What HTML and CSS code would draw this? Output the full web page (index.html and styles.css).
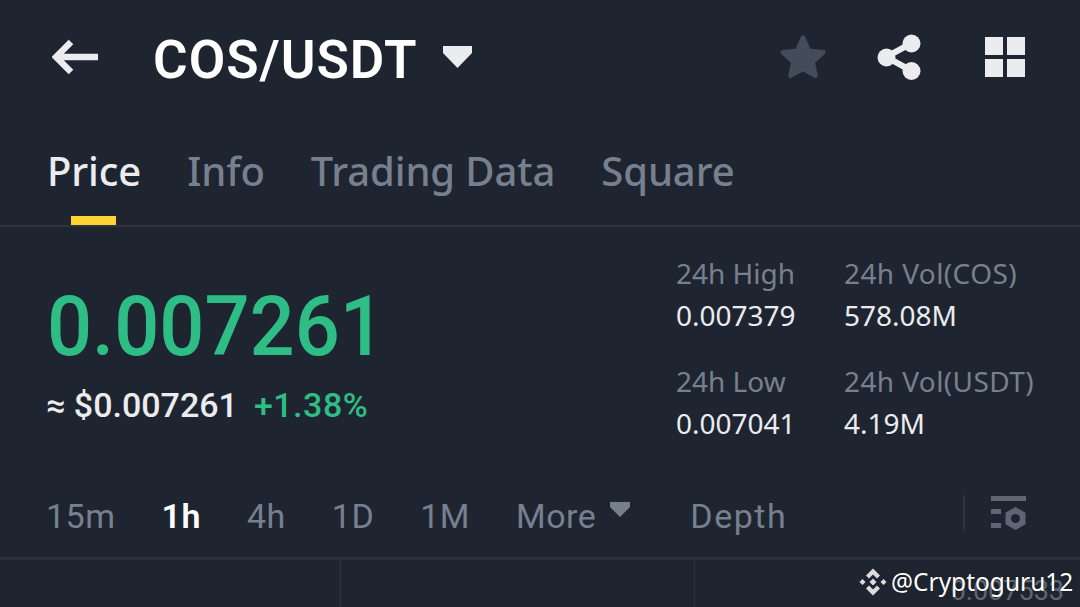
FILE: index.html
```html
<!DOCTYPE html>
<html lang="en">
<head>
<meta charset="utf-8">
<title>COS/USDT</title>
<link rel="stylesheet" href="styles.css">
</head>
<body>
<main class="screen">
  <header class="topbar">
    <svg class="back" width="46" height="36" viewBox="0 0 46 36"><path d="M46 18H5M19 3 4 18l15 15" fill="none" stroke="#eaecef" stroke-width="6.500"/></svg>
    <h1 class="pair">COS/USDT</h1>
    <svg class="caret" width="29" height="22" viewBox="0 0 29 22"><path d="M0 0h29v7L14.500 22 0 7z" fill="#eaecef"/></svg>
    <div class="actions">
      <svg class="star" width="46" height="46" viewBox="0 0 46 46"><path d="M23 1.500c1 0 1.800.6 2.200 1.500l5.300 11.800 13 1.300c2 .2 2.700 2.500 1.300 3.800l-9.700 8.900 2.700 12.500c.4 1.900-1.700 3.400-3.400 2.400L23 37.400l-11.400 6.300c-1.700 1-3.800-.5-3.400-2.400l2.700-12.500-9.700-8.900c-1.400-1.300-.7-3.600 1.300-3.800l13-1.300L20.800 3c.4-.9 1.200-1.500 2.200-1.500z" fill="#434c5a"/></svg>
      <svg class="share" width="44" height="46" viewBox="0 0 44 46"><path d="M35 9 9 23l26 14" fill="none" stroke="#eaecef" stroke-width="6"/><circle cx="34.500" cy="9.500" r="9" fill="#eaecef"/><circle cx="9.500" cy="23.500" r="9" fill="#eaecef"/><circle cx="34.500" cy="37" r="9" fill="#eaecef"/></svg>
      <svg class="grid-icon" width="40" height="40" viewBox="0 0 40 40"><path d="M0 0h18v18H0zM22 0h18v18H22zM0 22h18v18H0zM22 22h18v18H22z" fill="#eaecef"/></svg>
    </div>
  </header>

  <nav class="tabs">
    <a class="tab tab-active">Price</a>
    <a class="tab">Info</a>
    <a class="tab">Trading Data</a>
    <a class="tab">Square</a>
  </nav>

  <section class="summary">
    <div class="quote">
      <div class="last">0.007261</div>
      <div class="sub"><span class="fiat">≈ $0.007261</span><span class="change">+1.38%</span></div>
    </div>
    <div class="stats">
      <div class="stat"><span class="label">24h High</span><span class="value">0.007379</span></div>
      <div class="stat"><span class="label label-wide">24h Vol(COS)</span><span class="value">578.08M</span></div>
      <div class="stat"><span class="label">24h Low</span><span class="value">0.007041</span></div>
      <div class="stat"><span class="label label-wide">24h Vol(USDT)</span><span class="value">4.19M</span></div>
    </div>
  </section>

  <section class="intervals">
    <span class="iv">15m</span>
    <span class="iv iv-active">1h</span>
    <span class="iv">4h</span>
    <span class="iv">1D</span>
    <span class="iv">1M</span>
    <span class="iv iv-more">More<svg width="20" height="15" viewBox="0 0 20 15"><path d="M0 0h20v5L10 15 0 5z" fill="#76808f"/></svg></span>
    <span class="iv iv-depth">Depth</span>
    <span class="tools">
      <svg width="36" height="36" viewBox="0 0 36 36"><path d="M0 1h35v5H0zM0 14h10v5H0zM0 28h10v5H0z" fill="#5e6673"/><path d="M24.500 12l10 5.800v11.500l-10 5.800-10-5.800V17.800z" fill="#5e6673"/><circle cx="24.500" cy="23.500" r="4.500" fill="#1f2530"/></svg>
    </span>
  </section>

  <section class="chart">
    <div class="cell"></div>
    <div class="cell"></div>
    <div class="cell cell-last"><span class="axis">0.007533</span></div>
  </section>

  <div class="mark">
    <svg width="28" height="28" viewBox="0 0 28 28"><path d="M14 .5 21 7.500 18 10.500 14 6.500 10 10.500 7 7.500zM14 27.500 21 20.500 18 17.500 14 21.500 10 17.500 7 20.500zM.5 14 3.500 11 6.500 14 3.500 17zM27.500 14 24.500 11 21.500 14 24.500 17zM14 10.500 17.500 14 14 17.500 10.500 14z" fill="#dcdcdc"/></svg>
    <span>@Cryptoguru12</span>
  </div>
</main>
</body>
</html>
```

FILE: styles.css
```css
* { box-sizing: border-box; margin: 0; padding: 0; }
html, body { width: 1080px; height: 607px; overflow: hidden; background: #1f2530; }
body { font-family: "Noto Sans", "Liberation Sans", sans-serif; color: #eaecef; }

.screen { position: relative; width: 1080px; height: 607px; display: flex; flex-direction: column; }

.topbar { height: 117px; display: flex; align-items: center; padding-left: 52px; }
.back { flex: none; margin-bottom: 3px; }
.pair { margin-left: 55px; margin-top: 3px; font: 600 53px/1 "Roboto", sans-serif; letter-spacing: 1px; color: #fff; width: 266px; white-space: nowrap; }
.caret { margin-left: 24px; margin-top: -3px; }
.actions { margin-left: auto; margin-bottom: 3px; display: flex; align-items: center; gap: 51px; padding-right: 55px; }
.share { margin-right: 13px; }

.tabs { height: 110px; display: flex; gap: 46px; padding-left: 47px; border-bottom: 2px solid #2f343c; align-items: flex-start; }
.tab { position: relative; height: 108px; font-size: 40px; font-weight: 500; line-height: 108px; letter-spacing: -.1px; color: #76808f; white-space: nowrap; }
.tab-active { color: #eaecef; }
.tab-active::after { content: ""; position: absolute; left: 24px; bottom: 0; width: 45px; height: 9px; background: #fcd535; }

.summary { height: 250px; display: flex; justify-content: space-between; padding: 28px 46px 0 47px; }
.last { font: 500 84px/1 "Roboto", sans-serif; color: #2ebd85; margin-top: 30px; transform: scaleX(.945); transform-origin: left center; }
.sub { display: flex; gap: 16px; margin-top: 16px; font: 500 34px/1.2 "Roboto", sans-serif; }
.fiat { color: #eaecef; margin-left: -1px; }
.change { color: #2ebd85; letter-spacing: .5px; }

.stats { display: grid; grid-template-columns: 168px 190px; row-gap: 30px; align-content: start; }
.stat { display: flex; flex-direction: column; }
.label { font-size: 28px; line-height: 36px; color: #76808f; white-space: nowrap; }
.label-wide { letter-spacing: .4px; }
.value { font-size: 28px; line-height: 36px; margin-top: 6px; color: #eaecef; white-space: nowrap; }

.intervals { height: 83px; display: flex; align-items: center; gap: 46px; padding: 0 53px 2px 46px; border-bottom: 3px solid #2a303a; font: 400 34px/1 "Roboto", sans-serif; letter-spacing: .5px; color: #76808f; }
.iv { white-space: nowrap; }
.iv-active { color: #fff; font-weight: 600; }
.iv-more { display: flex; align-items: flex-start; gap: 14px; }
.iv-more svg { margin-top: 3px; }
.iv-depth { margin-left: 14px; letter-spacing: 1.500px; }
.tools { margin-left: auto; margin-bottom: 6px; display: flex; align-items: center; height: 36px; border-left: 2px solid #2f343c; padding-left: 26px; }

.chart { flex: 1; display: flex; }
.cell { width: 354px; border-right: 1px solid #2f343c; }
.cell:first-child { width: 341px; }
.cell-last { flex: 1; border-right: 0; position: relative; }
.axis { position: absolute; right: 16px; top: 18px; font: 400 27px/1 "Roboto", sans-serif; color: #5e6673; }

.mark { position: absolute; left: 859px; top: 566px; display: flex; align-items: center; gap: 4px; font: 400 24.500px/32px "Noto Sans", sans-serif; color: #fff; text-shadow: 0 0 2px rgba(0,0,0,.5); }
```
